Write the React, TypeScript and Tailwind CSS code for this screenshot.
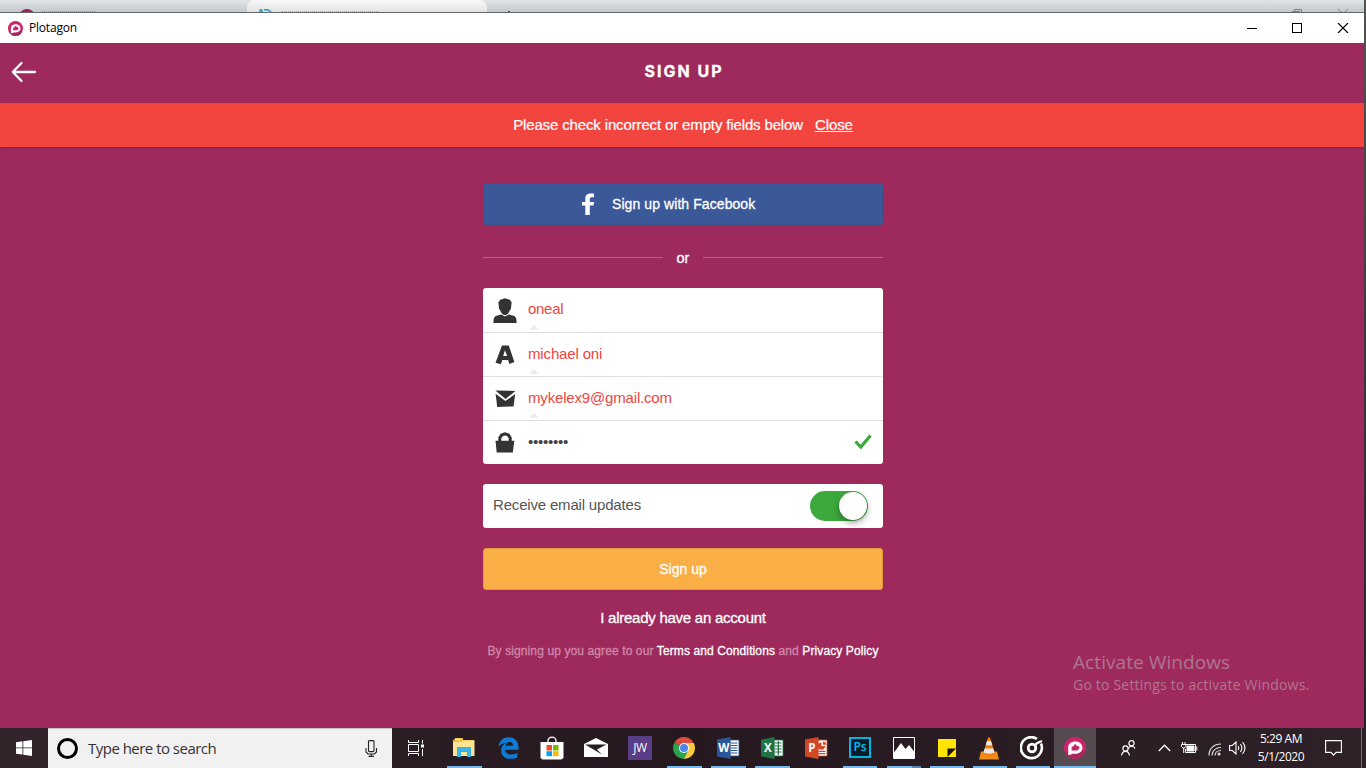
import React from 'react';

const PlotagonLogo: React.FC<{ size: number }> = ({ size }) => (
  <svg width={size} height={size} viewBox="0 0 22 22">
    <circle cx="11" cy="11" r="11" fill="#cf226c" />
    <path d="M0.8 14.5a10.8 10.8 0 0 0 20.4 0z" fill="#a8285c" />
    <path d="M4.2 18V10.5C4.2 6.800 7.200 4.600 11.400 4.600s7 2.600 7 6.100-2.800 6-7 6H8.600C7.500 16.700 7 18 4.200 18z" fill="#fff" />
    <path d="M7.600 9.600h2.100V8.800c0-1.800 2.300-2.200 2.900-.6v1.100c1.600-1.100 3.500.3 2.600 2l-1.700 2.300H7.600z" fill="#c5246a" />
  </svg>
);

const UserIcon = () => (
  <svg width="24" height="26" viewBox="0 0 24 26" fill="#333">
    <path d="M7.2 1.8L12 .3l4.8 1.5 1.8 2.6-.7 6.4-2.8 4.6-2.1 1.7h-2l-2.1-1.7-2.8-4.6-.7-6.4z" />
    <path d="M.7 20.5l1.8-2.4 5.8-1.700 3.700 2.100 3.700-2.100 5.800 1.700 1.800 2.400.3 4.500H.4z" />
  </svg>
);

const LetterIcon = () => (
  <svg width="20" height="20" viewBox="0 0 20 20" fill="#333">
    <path fillRule="evenodd" d="M7 .5h6.800L19.400 17l-5 2.100-1.300-4-5.800-.2-1.400 4.300L.5 17.800zM9.900 5.200L8.200 11h4z" />
  </svg>
);

const MailIcon = () => (
  <svg width="21" height="17" viewBox="0 0 21 17" fill="#333">
    <path d="M.4.5l20 .4-9.800 8z" />
    <path d="M.6 3.800l9.800 7.200 9.800-7-1.700 12.400L2.200 17z" />
  </svg>
);

const LockIcon = () => (
  <svg width="20" height="21" viewBox="0 0 20 21">
    <path d="M4.800 9.500V6l1.800-3L10 1.800 13.400 3l1.800 3v3.500" fill="none" stroke="#333" strokeWidth="3" />
    <path d="M.5 8.800h18.800l-1.500 11.800H1.700z" fill="#333" />
  </svg>
);

const OfficeIcon: React.FC<{ letter: string; color: string; kind: string }> = ({ letter, color, kind }) => (
  <svg width="23" height="22" viewBox="0 0 23 22">
    <path d="M13 3h9v16h-9z" fill="#fff" stroke={color} strokeWidth=".8" />
    {kind === 'word' && <path d="M14 6h6.5M14 8.500h6.500M14 11h6.500M14 13.500h6.500M14 16h6.500" stroke={color} strokeWidth="1.200" />}
    {kind === 'excel' && <path d="M14 6h6.500M14 9h6.500M14 12h6.500M14 15h6.500M17.300 4v14" stroke={color} strokeWidth="1.200" />}
    {kind === 'ppt' && (
      <>
        <path d="M16.500 5.500a3.600 3.600 0 1 0 3.600 3.600h-3.600zM18 4.400v3.300h3.200A3.500 3.500 0 0 0 18 4.400z" fill={color} />
        <path d="M14 14.300h6.500M14 16.700h6.500" stroke={color} strokeWidth="1.200" />
      </>
    )}
    <path d="M0 2.600L13.500 0v22L0 19.400z" fill={color} />
    <text x="6.800" y="15.200" textAnchor="middle" fill="#fff" fontSize="11.500" fontWeight="700" fontFamily="Open Sans, sans-serif">{letter}</text>
  </svg>
);

const fields = [
  { icon: <UserIcon />, value: 'oneal', track: 'tracking-[-0.3px]', error: true },
  { icon: <LetterIcon />, value: 'michael oni', track: 'tracking-[-0.15px]', error: true },
  { icon: <MailIcon />, value: 'mykelex9@gmail.com', track: 'tracking-[-0.17px]', error: true },
  { icon: <LockIcon />, value: '••••••••', track: 'tracking-[-0.25px]', error: false },
];

const apps = [
  {
    name: 'explorer',
    slot: 'w-11',
    bar: 'w-[35px]',
    icon: (
      <svg width="22" height="20" viewBox="0 0 22 20">
        <path d="M0 1.500h2V0h8v2h11v16H0z" fill="#f3b92c" />
        <path d="M2 .8h6v1.400H2z" fill="#fff3c4" />
        <path d="M0 4h8l2-1.500h11.500V18H0z" fill="#fde394" />
        <path d="M4 9h14v10h-4v-5H8v5H4z" fill="#36b4e6" />
      </svg>
    ),
  },
  {
    name: 'edge',
    slot: 'w-11',
    bar: '',
    icon: (
      <svg width="21" height="22" viewBox="0 0 21 22">
        <path d="M.4 9.800C1.300 3.500 5.500.3 10.800.3c6.200 0 9.700 4.300 9.700 10v2.400H7.200c.2 3.300 2.800 4.800 6 4.800 2.200 0 4.300-.6 6.100-1.700v4.600c-2 1-4.300 1.400-6.800 1.400-6 0-9.300-3.600-9.300-8.400 0-3.400 1.800-6.200 5-7.700C4.800 6 2.200 7.300.4 9.800zm7-1h7.700c0-2.400-1.300-3.800-3.600-3.800-2.200 0-3.600 1.600-4.100 3.800z" fill="#0c7bd8" />
      </svg>
    ),
  },
  {
    name: 'store',
    slot: 'w-11',
    bar: '',
    icon: (
      <svg width="24" height="24" viewBox="0 0 24 24">
        <path d="M8 7V4.500a4 3.300 0 0 1 8 0V7" fill="none" stroke="#fff" strokeWidth="1.300" />
        <path d="M.5 6h23v16l-2.200 1.500H2.500L.5 22z" fill="#fff" />
        <path d="M6.500 9H12v5.500H6.500z" fill="#f05022" />
        <path d="M13 9h5.500v5.500H13z" fill="#7eb900" />
        <path d="M6.500 15.200H12v5H6.500z" fill="#00a3ee" />
        <path d="M13 15.200h5.500v5H13z" fill="#ffb800" />
      </svg>
    ),
  },
  {
    name: 'mail',
    slot: 'w-11',
    bar: '',
    icon: (
      <svg width="24" height="20" viewBox="0 0 24 20">
        <path d="M0 6L12 0l12 6v13H0z" fill="#fff" />
        <path d="M1 6.500h21.500L13 11.500l5 5z" fill="#2a1c23" />
      </svg>
    ),
  },
  {
    name: 'jw',
    slot: 'w-11',
    bar: '',
    icon: (
      <div className="flex h-6 w-6 items-center justify-center bg-[#5a3c87] font-['Open_Sans'] text-[12px] tracking-[-0.5px] text-white">JW</div>
    ),
  },
  {
    name: 'chrome',
    slot: 'w-11',
    bar: 'w-[35px]',
    icon: (
      <svg width="22" height="22" viewBox="0 0 22 22">
        <path d="M11 11L1.500 5.500A11 11 0 0 1 20.500 5.500z" fill="#de4b3c" />
        <path d="M11 11V6h9.800A11 11 0 0 1 11 22z" fill="#fbcb43" />
        <path d="M11 11l4.300 2.500L11 22A11 11 0 0 1 1.500 5.500z" fill="#2ba24c" />
        <path d="M11 11V6h-5z" fill="#de4b3c" />
        <circle cx="11" cy="11" r="5" fill="#fff" />
        <circle cx="11" cy="11" r="4" fill="#4a86ee" />
      </svg>
    ),
  },
  { name: 'word', slot: 'w-11', bar: 'w-[35px]', icon: <OfficeIcon letter="W" color="#2a579a" kind="word" /> },
  { name: 'excel', slot: 'w-11', bar: 'w-[35px]', icon: <OfficeIcon letter="X" color="#207346" kind="excel" /> },
  { name: 'powerpoint', slot: 'w-11', bar: '', icon: <OfficeIcon letter="P" color="#d24726" kind="ppt" /> },
  {
    name: 'photoshop',
    slot: 'w-11',
    bar: 'w-[34px]',
    icon: (
      <div className="mb-0.5 flex h-[21px] w-[22px] items-center justify-center border-2 border-[#00b4e4] bg-[#051c28] font-['Open_Sans'] text-[12px] font-semibold text-[#00c2f2]">Ps</div>
    ),
  },
  {
    name: 'photos',
    slot: 'w-[43px]',
    bar: 'w-[34px] border-r-[9px] border-[#5b86b0]',
    icon: (
      <svg width="22" height="22" viewBox="0 0 22 22">
        <path d="M.5.5h21v21H.5z" fill="none" stroke="#fff" />
        <path d="M1 15.500L8 6l4.500 6 3.500-4 5.500 7v6H1z" fill="#fff" />
      </svg>
    ),
  },
  {
    name: 'notes',
    slot: 'w-[43px]',
    bar: 'w-[34px]',
    icon: (
      <svg width="18" height="18" viewBox="0 0 18 18">
        <path d="M0 0h18v18H0z" fill="#ffe500" />
        <path d="M9.500 9.500H18L9.500 18z" fill="#171016" />
      </svg>
    ),
  },
  {
    name: 'vlc',
    slot: 'w-[43px]',
    bar: 'w-[34px]',
    icon: (
      <svg className="mr-0.5" width="20" height="23" viewBox="0 0 20 23">
        <path d="M2 14.500h16l2 8H0z" fill="#f28a18" />
        <path d="M9 .5h2L16 17c-2 2.300-10 2.300-12 0z" fill="#f47f12" />
        <path d="M8 4h4l1.300 4.300H6.700zM5.700 11.500h8.600l1.200 3.800c-2 1.800-9 1.800-11 0z" fill="#e9e9e9" />
      </svg>
    ),
  },
  {
    name: 'groove',
    slot: 'w-[43px]',
    bar: 'w-[34px]',
    icon: (
      <svg className="mr-0.5" width="24" height="24" viewBox="0 0 24 24" fill="none" stroke="#fff">
        <path d="M21 7.500A10.500 10.500 0 1 1 17 2.800" strokeWidth="2.600" />
        <circle cx="12" cy="12" r="3.800" strokeWidth="2.800" />
        <path d="M15.500 12V8.500c1-2 3-2 6.500-3.500" strokeWidth="2.400" />
      </svg>
    ),
  },
  { name: 'plotagon', slot: 'w-[42px] bg-[#554b50]', bar: 'w-full', icon: <PlotagonLogo size={22} /> },
];

const App: React.FC = () => {
  return (
    <div className="relative flex h-[768px] w-[1366px] flex-col overflow-hidden bg-[#9e2a5d] font-['Liberation_Sans',Arial,sans-serif]">
      {/* browser window peeking out behind */}
      <div className="flex h-[13px] shrink-0 justify-between overflow-hidden border-b border-[#63686c] bg-linear-to-b from-[#e0e5e8] to-[#c4c8cc]">
        <div className="flex">
          <div className="ml-[19px] mt-[9px] h-4 w-4 rounded-full bg-[#a31f58]"></div>
          <div className="ml-[7px] mt-[11px] h-px w-[53px] border-t border-dotted border-[#999]"></div>
          <div className="ml-[152px] flex h-4 w-[240px] shrink-0 rounded-t-lg bg-linear-to-b from-[#f8f8f8] to-[#dcdcdc]">
            <svg className="-mt-px ml-3 translate-y-2.5" width="14" height="14" viewBox="0 0 14 14" fill="none" stroke="#2a9cc8" strokeWidth="1.500">
              <circle cx="2" cy="2" r="1.200" />
              <path d="M5 1c4-1 7 1 8 5M5 4c2-.5 4 .5 5 3" />
            </svg>
            <div className="ml-2 mt-[11px] h-px w-[98px] border-t border-dotted border-[#aaa]"></div>
          </div>
          <div className="ml-[21px] mt-[11px] h-2 w-[2px] bg-[#55595c]"></div>
        </div>
        <svg className="mr-4 mt-[9px]" width="58" height="10" viewBox="0 0 58 10" fill="none" stroke="#7b8085">
          <path d="M.5 10V2.500h7V10M2.500 2.500V.5h7V8M46 0l10 10M56 0L46 10" />
        </svg>
      </div>

      <div className="flex h-[30px] shrink-0 items-center bg-white pl-2">
        <PlotagonLogo size={15} />
        <span className="ml-1.5 font-['Open_Sans',sans-serif] text-[12px] tracking-[-0.2px] text-black">Plotagon</span>
        <svg className="ml-auto mr-[17px]" width="102" height="10" viewBox="0 0 102 10" fill="none" stroke="#000">
          <path d="M0 5.500h10M45.500.5h9v9h-9z" shapeRendering="crispEdges" />
          <path d="M91 0l10 10M101 0L91 10" strokeWidth="1.200" />
        </svg>
      </div>

      <header className="grid h-[60px] shrink-0 grid-cols-3 items-center">
        <svg className="mb-0.5 ml-[11px]" width="26" height="22" viewBox="0 0 26 22" fill="none" stroke="#fff" strokeWidth="2.300" strokeLinecap="round" strokeLinejoin="round">
          <path d="M10.500 2L1.800 11l8.700 9M1.800 11H24" />
        </svg>
        <h1 className="pb-1 pl-0.5 text-center font-[Inter,sans-serif] text-[16px] font-bold tracking-[2px] text-white [-webkit-text-stroke:0.3px]">SIGN UP</h1>
      </header>

      <div className="flex h-11 shrink-0 items-center justify-center bg-[#f24540] text-[15px] text-white shadow-[0_1px_2px_rgba(0,0,0,0.25)] [-webkit-text-stroke:0.2px]">
        <span className="tracking-[-0.14px]">Please check incorrect or empty fields below</span>
        <a className="ml-3 tracking-[-0.1px] underline">Close</a>
      </div>

      <main className="mx-auto flex w-[400px] grow flex-col pt-9">
        <button className="flex h-[42px] shrink-0 items-center rounded-[3px] border border-[#375189] bg-[#3b5998] pl-[97px] text-[14px] text-white">
          <svg width="14" height="22" viewBox="0 0 14 22" fill="#fff">
            <path d="M4.300 22V12.500H1V9h3.300V5.500C4.300 2 6.300.4 9.600.4H13v3.900h-2.300c-1.500 0-1.900.7-1.900 2.100V9h4.300l-.6 3.500H8.800V22z" />
          </svg>
          <span className="ml-[17px] tracking-[0.080px] [-webkit-text-stroke:0.3px]">Sign up with Facebook</span>
        </button>

        <div className="flex h-[63px] shrink-0 items-center pt-0.5 text-white">
          <div className="h-px grow bg-[#bd5c88]"></div>
          <span className="w-10 pt-0.5 text-center text-[14.500px] [-webkit-text-stroke:0.3px]">or</span>
          <div className="h-px grow bg-[#bd5c88]"></div>
        </div>

        <div className="shrink-0 overflow-hidden rounded-[3px] bg-white">
          {fields.map((field, index) => (
            <div key={index} className={`relative flex h-11 items-center ${index > 0 ? 'border-t border-[#e0e0e0]' : 'pt-px'}`}>
              <div className="flex w-[45px] justify-center pr-px">{field.icon}</div>
              <span className={`text-[15px] ${index > 0 ? '' : 'pb-[3px]'} ${field.track} ${field.error ? 'text-[#f04540]' : 'text-[#444]'}`}>{field.value}</span>
              {field.error ? (
                <div className="absolute bottom-[2px] left-[46px] h-0 w-0 border-x-[5px] border-b-[5px] border-x-transparent border-b-[#f0ebe6]"></div>
              ) : (
                <svg className="mb-0.5 ml-auto mr-[11px]" width="18" height="16" viewBox="0 0 18 16" fill="none" stroke="#3daa3d" strokeWidth="3.200">
                  <path d="M1.500 7.500l5.300 5.600L16.500 1.500" />
                </svg>
              )}
            </div>
          ))}
        </div>

        <div className="mt-5 flex h-11 shrink-0 items-center justify-between rounded-[3px] bg-white pl-2.5 pr-[15px]">
          <span className="pb-0.5 text-[15px] tracking-[-0.180px] text-[#555]">Receive email updates</span>
          <div className="flex h-[30px] w-[58px] items-center justify-end rounded-full bg-[#3da93d] pr-px">
            <div className="h-7 w-7 rounded-full bg-white shadow-[0_3px_6px_rgba(0,0,0,0.35)]"></div>
          </div>
        </div>

        <button className="mt-5 h-[42px] shrink-0 rounded-[3px] border border-[#de9b3d] bg-[#f9ae46] text-[14px] text-white [-webkit-text-stroke:0.3px]">Sign up</button>
        <a className="mt-[17px] text-center text-[15px] tracking-[-0.250px] text-white [-webkit-text-stroke:0.3px]">I already have an account</a>
        <p className="mt-3 whitespace-nowrap text-center text-[12px] tracking-[0.110px] text-[#cf87a9] [-webkit-text-stroke:0.3px]">
          By signing up you agree to our <a className="text-white">Terms and Conditions</a> and <a className="text-white">Privacy Policy</a>
        </p>
      </main>

      {/* activation watermark */}
      <div className="absolute left-[1073px] top-[650px] font-['Open_Sans',sans-serif] text-[#ae7592]">
        <div className="text-[19px] leading-6 tracking-[0.080px]">Activate Windows</div>
        <div className="text-[14px] leading-[21px] tracking-[0.200px]">Go to Settings to activate Windows.</div>
      </div>

      <footer className="flex h-10 shrink-0 bg-linear-to-r from-[#33242b] via-[#25181f] to-[#2e2128] font-['Open_Sans',sans-serif]">
        <div className="flex w-12 items-center justify-center">
          <svg width="16" height="16" viewBox="0 0 16 16" fill="#fff">
            <path d="M0 2.200l6.500-.9v6.200H0zM7.300 1.200L16 0v7.500H7.300zM0 8.300h6.500v6.300L0 13.700zM7.300 8.300H16V16l-8.700-1.200z" />
          </svg>
        </div>
        <div className="flex w-[344px] items-center border-t border-[#c5c0c3] bg-[#f1f1f1] pl-[9px] pr-3.5">
          <div className="h-[21px] w-[21px] rounded-full border-[3px] border-black"></div>
          <span className="ml-2.5 text-[15px] tracking-[-0.520px] text-[#333]">Type here to search</span>
          <svg className="ml-auto" width="13" height="17" viewBox="0 0 13 17" fill="none" stroke="#222" strokeWidth="1.100">
            <rect x="3.500" y=".6" width="5.500" height="11" rx="1" />
            <path d="M1 8v4l2 2h6.500l2-2V8M6.300 14v2.400M3.500 16.400h5.500" />
          </svg>
        </div>
        <div className="flex w-[50px] items-center pl-4">
          <svg width="17" height="16" viewBox="0 0 17 16" fill="none" stroke="#fff">
            <path d="M.5 0v2.500h10V0M.5 16v-2.500h10V16M.5 4.500h10v7H.5zM14.500 0v3.500M14.500 9v7" />
            <path d="M13 4.500h3v3h-3z" fill="#fff" stroke="none" />
          </svg>
        </div>
        {apps.map((app) => (
          <div key={app.name} className={`relative flex items-center justify-center ${app.slot}`}>
            {app.icon}
            {app.bar && <div className="absolute inset-x-0 bottom-0 flex justify-center"><div className={`h-0.5 bg-[#76b9ed] ${app.bar}`}></div></div>}
          </div>
        ))}
        <div className="flex grow items-center text-white">
          <svg className="ml-[25px]" width="15" height="16" viewBox="0 0 15 16" fill="none" stroke="#fff" strokeWidth="1.200">
            <circle cx="10.500" cy="3.200" r="2.600" />
            <path d="M7.500 8.500c1-3 5.500-3 6.500 0" />
            <circle cx="4.500" cy="8.500" r="2.600" />
            <path d="M.6 15.500c.5-5.500 7.300-5.500 7.800 0" />
          </svg>
          <svg className="ml-[22px]" width="13" height="8" viewBox="0 0 13 8" fill="none" stroke="#fff" strokeWidth="1.300">
            <path d="M.8 7L6.500 1.200 12.200 7" />
          </svg>
          <svg className="ml-2.5" width="17" height="12" viewBox="0 0 17 12" fill="none" stroke="#fff">
            <path d="M5 2.500h9.500v8H4.500V7M15.800 4.500v4M1.500 0v2M4 0v2M.5 2.500h4.500v2L3 6H2L.5 4.500zM2.700 6v5" />
            <path d="M6 4h7v5H6z" fill="#fff" />
          </svg>
          <svg className="ml-2.5 mt-0.5" width="14" height="13" viewBox="0 0 14 13" fill="none" stroke="#ddd" strokeWidth="1.200">
            <path d="M1 12.500C1 5.500 6 1 13 1M4 12.500c0-5 4-8 9-8M7 12.500c0-3 2.500-5 6-5" />
            <circle cx="11" cy="11" r="1" fill="#fff" />
          </svg>
          <svg className="ml-[7px]" width="17" height="14" viewBox="0 0 17 14" fill="none" stroke="#fff" strokeWidth="1.100">
            <path d="M.6 4.500h2.700L7 1v12L3.300 9.500H.6zM9 5c1 1.300 1 2.700 0 4M11.300 3c2 2.500 2 5.500 0 8M13.500 1.200c3 3.500 3 8 0 11.600" />
          </svg>
          <div className="ml-2.5 w-[50px] whitespace-nowrap text-center text-[12px] leading-[18px] tracking-[-0.450px]">
            <div>5:29 AM</div>
            <div>5/1/2020</div>
          </div>
          <svg className="ml-[19px]" width="17" height="16" viewBox="0 0 17 16" fill="none" stroke="#fff" strokeWidth="1.100">
            <path d="M.6.6h15.800v11.800H11l-2.500 2.800L6 12.400H.6z" />
          </svg>
          <div className="ml-auto mr-1 h-full w-px bg-[#75696f]"></div>
        </div>
      </footer>

      {/* edge of the window behind, right of the app */}
      <div className="absolute right-0 top-0 h-[728px] w-0.5 bg-linear-to-b from-[#54524f] to-[#262022]"></div>
    </div>
  );
};

export default App;
